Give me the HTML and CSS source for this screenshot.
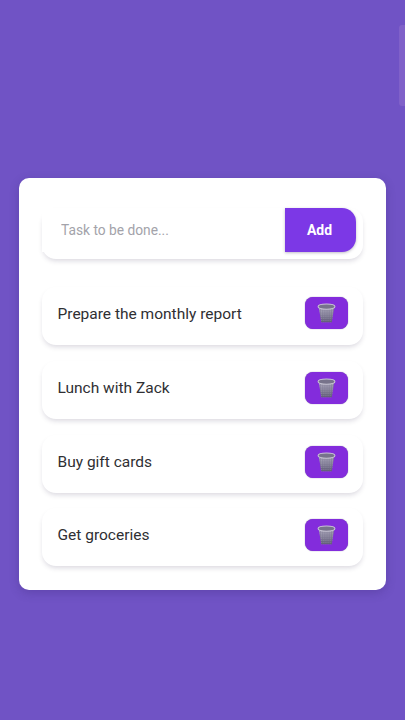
FILE: index.html
```html
<!DOCTYPE html>
<html lang="en">
<head>
    <meta charset="UTF-8">
    <meta name="viewport" content="width=device-width, initial-scale=1.0">
    <title>Todo List</title>
    <link rel="stylesheet" href="styles.css">
</head>
<body>
    <div class="side-handle"></div>
    <svg class="icon-defs" width="0" height="0">
        <defs>
            <pattern id="mesh" width="2" height="2" patternUnits="userSpaceOnUse">
                <rect width="2" height="2" fill="#6f6b86"/>
                <rect width="1" height="1" fill="#b4b0c4"/>
            </pattern>
            <linearGradient id="fade" x1="0" y1="0" x2="0" y2="1">
                <stop offset="0" stop-color="#c9c6d6" stop-opacity="0.35"/>
                <stop offset="1" stop-color="#55506c" stop-opacity="0.55"/>
            </linearGradient>
            <symbol id="bin" viewBox="0 0 18 19">
                <path d="M1.8 4.5 L4 18.2 H14 L16.2 4.5 Z" fill="url(#mesh)"/>
                <path d="M1.8 4.5 L4 18.2 H14 L16.2 4.5 Z" fill="url(#fade)"/>
                <ellipse cx="9" cy="3.4" rx="8" ry="2.5" fill="#77738b" stroke="#c6c3d2" stroke-width="1"/>
            </symbol>
        </defs>
    </svg>
    <main class="card">
        <form class="task-form">
            <input class="task-input" type="text" placeholder="Task to be done...">
            <button class="add-btn" type="button">Add</button>
        </form>
        <ul class="task-list">
            <li class="task">
                <span>Prepare the monthly report</span>
                <button class="del-btn" type="button" aria-label="Delete"><svg class="bin"><use href="#bin"/></svg></button>
            </li>
            <li class="task">
                <span>Lunch with Zack</span>
                <button class="del-btn" type="button" aria-label="Delete"><svg class="bin"><use href="#bin"/></svg></button>
            </li>
            <li class="task">
                <span>Buy gift cards</span>
                <button class="del-btn" type="button" aria-label="Delete"><svg class="bin"><use href="#bin"/></svg></button>
            </li>
            <li class="task">
                <span>Get groceries</span>
                <button class="del-btn" type="button" aria-label="Delete"><svg class="bin"><use href="#bin"/></svg></button>
            </li>
        </ul>
    </main>
</body>
</html>
```

FILE: styles.css
```css
* { margin: 0; padding: 0; box-sizing: border-box; font-family: Roboto, sans-serif; }
body {
    background: #7053c5;
    height: 720px;
    display: flex;
    justify-content: center;
    padding-top: 178px;
    overflow: hidden;
    position: relative;
}
.icon-defs {
    position: absolute;
}
.side-handle {
    position: absolute;
    top: 25px;
    right: 0;
    width: 6px;
    height: 81px;
    background: #8061c9;
    border-radius: 3px 0 0 3px;
}
.card {
    width: 367px;
    height: 412px;
    background: #fff;
    border-radius: 10px;
    padding: 30px 23px 0;
    box-shadow: 0 3px 10px rgba(60, 40, 120, 0.3);
}
.task-form {
    display: flex;
    justify-content: space-between;
    align-items: flex-start;
    height: 51px;
    padding-right: 7px;
    border-radius: 14px;
    background: #fff;
    box-shadow: 0 3px 5px -1px rgba(40, 30, 70, 0.17);
}
.task-input {
    flex: 1;
    min-width: 0;
    height: 44px;
    border: none;
    outline: none;
    padding-left: 19px;
    font-size: 13.75px;
    color: #333;
}
.task-input::placeholder {
    color: #a3a3aa;
    opacity: 1;
}
.add-btn {
    width: 71px;
    height: 44px;
    padding-right: 2px;
    border: none;
    border-radius: 0 14px 14px 0;
    background: #7c38e6;
    color: #fff;
    font-size: 14px;
    font-weight: 700;
    box-shadow: 0 1px 3px rgba(40, 30, 70, 0.3);
}
.task-list {
    list-style: none;
    display: flex;
    flex-direction: column;
    gap: 16px;
    margin-top: 28px;
}
.task {
    display: flex;
    justify-content: space-between;
    align-items: center;
    height: 58px;
    padding: 0 15px 5px 15.5px;
    border-radius: 14px;
    background: #fff;
    color: #2f2f33;
    font-size: 15.5px;
    box-shadow: 0 3px 5px -1px rgba(40, 30, 70, 0.17);
}
.task:last-child {
    margin-top: -1px;
}
.del-btn {
    display: flex;
    justify-content: center;
    align-items: center;
    width: 43px;
    height: 32px;
    margin-bottom: 2px;
    border: none;
    border-radius: 8px;
    background: #832cdc;
    box-shadow: 0 0 1px rgba(60, 30, 120, 0.8);
}
.task + .task .del-btn {
    margin-bottom: 0;
}
.bin {
    width: 19px;
    height: 20px;
}
```
